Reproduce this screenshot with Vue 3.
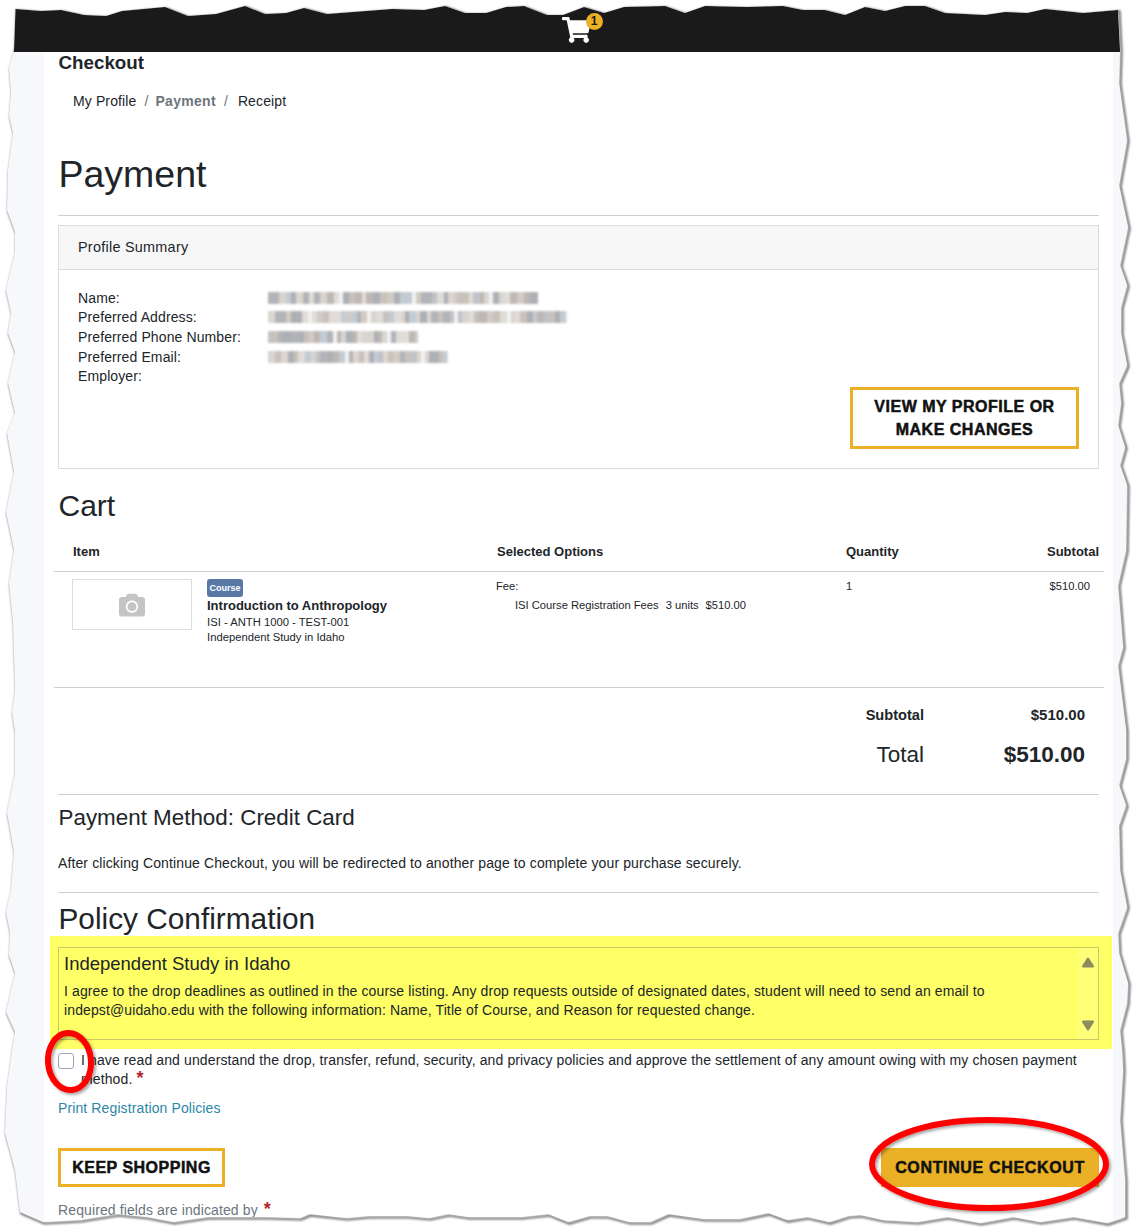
<script setup>
const edge = [
  [15.5,9],[41,11],[61,10],[84,15],[106,16],[122,11],[165,7],[188,16],[216,14],[245,6],[265,14],[286,13],[304,8],[327,14],[392,9],[424,10],[445,6],[465,13],[486,13],[506,7],[524,6],[547,15],[563,15],[584,7],[604,13],[624,7],[665,6],[685,13],[705,6],[747,7],[783,6],[803,10],[825,10],[845,15],[865,7],[885,11],[905,6],[925,6],[945,13],[985,15],[1005,12],[1027,13],[1045,9],[1083,13],[1118,10],
  [1120,50],[1119,83],[1127,140],[1119,185],[1128,227],[1120,265],[1127,285],[1121,307],[1121,333],[1127,365],[1119,383],[1121,403],[1118,425],[1125,447],[1120,465],[1127,485],[1126,550],[1118,585],[1123,647],[1118,665],[1126,730],[1126,758],[1119,785],[1126,805],[1119,825],[1120,870],[1127,907],[1118,933],[1119,953],[1128,983],[1127,1003],[1120,1030],[1122,1050],[1123,1070],[1120,1120],[1125,1180],[1125,1217],
  [1107,1223],[1073,1217],[1040,1222],[1013,1217],[980,1223],[947,1217],[917,1222],[883,1220],[860,1215],[848,1216],[829,1222],[807,1217],[787,1220],[768,1213],[739,1219],[704,1219],[668,1214],[650,1222],[629,1222],[607,1216],[589,1216],[568,1222],[548,1214],[521,1217],[468,1217],[448,1214],[429,1218],[407,1216],[368,1216],[346,1218],[309,1214],[300,1218],[267,1217],[233,1217],[207,1217],[173,1222],[147,1217],[117,1214],[80,1220],[43,1222],[20,1212],
  [15,1170],[5,1133],[7,1087],[12,1050],[15,1032],[6,1012],[15,973],[9,955],[10,933],[6,912],[11,890],[14,852],[7,813],[15,772],[15,732],[12,712],[15,690],[13,623],[9,583],[14,550],[6,512],[14,472],[7,433],[15,413],[8,383],[15,352],[8,333],[11,313],[6,290],[15,252],[15,232],[7,210],[8,170],[13,133],[9,115],[11,93],[9,68],[14,50]
]
const tornPath = 'M' + edge.map(p => p.join(' ')).join('L') + 'Z'
const outerPath = 'M0 0H1137V1232H0Z' + tornPath

const palette = ['#bdb8b4', '#d8d4d0', '#b2b4b9', '#c9c2bb', '#e0dcd8', '#c2c2c8', '#adb0b5', '#d2cbc4', '#c3ccd4', '#dcd6d0']

function blurBackground(width, seed) {
  let s = seed
  const next = () => {
    s = (s * 9301 + 49297) % 233280
    return s / 233280
  }
  const stops = []
  let x = 0
  let untilGap = 30 + next() * 60
  while (x < width) {
    const gap = x > untilGap
    const w = gap ? 4 : 4 + Math.floor(next() * 4)
    const colour = gap ? '#f2f2f2' : palette[Math.floor(next() * palette.length)]
    stops.push(`${colour} ${x}px ${x + w}px`)
    x += w
    if (gap) untilGap = x + 30 + next() * 60
  }
  return `linear-gradient(90deg, ${stops.join(', ')})`
}

const profile = [
  { label: 'Name:', width: 270, seed: 11 },
  { label: 'Preferred Address:', width: 300, seed: 47 },
  { label: 'Preferred Phone Number:', width: 150, seed: 83 },
  { label: 'Preferred Email:', width: 180, seed: 139 },
  { label: 'Employer:', width: 0, seed: 0 }
].map(row => ({
  ...row,
  blur: row.width ? { width: row.width + 'px', backgroundImage: blurBackground(row.width, row.seed) } : null
}))
</script>

<template>
  <div class="root">
    <header class="bar">
      <div class="cart">
        <svg class="cart-icon" viewBox="0 0 576 512" aria-hidden="true"><path fill="#fff" d="M528.12 301.319l47.273-208C578.806 78.301 567.391 64 551.99 64H159.208l-9.166-44.81C147.758 8.021 137.93 0 126.529 0H24C10.745 0 0 10.745 0 24v16c0 13.255 10.745 24 24 24h69.883l70.248 343.435C147.325 417.1 136 435.222 136 456c0 30.928 25.072 56 56 56s56-25.072 56-56c0-15.674-6.447-29.835-16.824-40h209.647C430.447 426.165 424 440.326 424 456c0 30.928 25.072 56 56 56s56-25.072 56-56c0-22.172-12.888-41.332-31.579-50.405l5.517-24.276c3.413-15.018-8.002-29.319-23.403-29.319H218.117l-6.545-32h293.145c11.206 0 20.92-7.754 23.403-18.681z"/></svg>
        <span class="cart-badge">1</span>
      </div>
    </header>

    <main class="main">
      <div class="checkout">Checkout</div>
      <nav class="crumbs">
        <span>My Profile</span><span class="sep">/</span><strong>Payment</strong><span class="sep sep-last">/</span><span>Receipt</span>
      </nav>
      <h1 class="title">Payment</h1>
      <hr class="rule rule-a">

      <section class="card">
        <div class="card-head">Profile Summary</div>
        <div class="card-body">
          <div v-for="row in profile" :key="row.label" class="pf-row">
            <span class="pf-label">{{ row.label }}</span>
            <span v-if="row.blur" class="pf-blur" :style="row.blur"></span>
          </div>
          <div class="pf-actions">
            <a class="btn-outline btn-profile">VIEW MY PROFILE OR<br>MAKE CHANGES</a>
          </div>
        </div>
      </section>

      <h2 class="cart-title">Cart</h2>
      <div class="table">
        <div class="t-head">
          <div class="th-item">Item</div>
          <div>Selected Options</div>
          <div>Quantity</div>
          <div class="th-sub">Subtotal</div>
        </div>
        <div class="t-row">
          <div class="item">
            <div class="thumb">
              <svg class="cam" viewBox="0 0 512 512" aria-hidden="true"><path fill="#c4c4c4" d="M512 144v288c0 26.5-21.5 48-48 48H48c-26.5 0-48-21.5-48-48V144c0-26.5 21.5-48 48-48h88l12.3-32.9c7-18.7 24.9-31.1 44.9-31.1h125.5c20 0 37.9 12.4 44.9 31.1L376 96h88c26.5 0 48 21.5 48 48zM376 288c0-66.2-53.8-120-120-120s-120 53.8-120 120 53.8 120 120 120 120-53.8 120-120zm-32 0c0 48.5-39.5 88-88 88s-88-39.5-88-88 39.5-88 88-88 88 39.5 88 88z"/></svg>
            </div>
            <div class="item-text">
              <span class="badge">Course</span>
              <div class="item-name">Introduction to Anthropology</div>
              <div class="item-meta">ISI - ANTH 1000 - TEST-001</div>
              <div class="item-meta">Independent Study in Idaho</div>
            </div>
          </div>
          <div class="options">
            <div class="opt-label">Fee:</div>
            <div class="opt-line"><span>ISI Course Registration Fees</span><span>3 units</span><span>$510.00</span></div>
          </div>
          <div class="qty">1</div>
          <div class="row-sub">$510.00</div>
        </div>
      </div>

      <div class="totals">
        <div class="tot-label">Subtotal</div>
        <div class="tot-val">$510.00</div>
        <div class="grand-label">Total</div>
        <div class="grand-val">$510.00</div>
      </div>

      <hr class="rule rule-b">
      <h3 class="method">Payment Method: Credit Card</h3>
      <p class="note">After clicking Continue Checkout, you will be redirected to another page to complete your purchase securely.</p>
      <hr class="rule rule-c">
      <h2 class="policy-title">Policy Confirmation</h2>

      <div class="highlight">
        <div class="policy-box">
          <div class="policy-text">
            <div class="policy-name">Independent Study in Idaho</div>
            <p class="policy-copy">I agree to the drop deadlines as outlined in the course listing. Any drop requests outside of designated dates, student will need to send an email to indepst@uidaho.edu with the following information: Name, Title of Course, and Reason for requested change.</p>
          </div>
          <div class="scroll">
            <svg class="arrow" viewBox="0 0 12 10" aria-hidden="true"><path d="M6 1.5L10.5 8.5H1.5Z" fill="#8c8c5e" stroke="#8c8c5e" stroke-width="2" stroke-linejoin="round"/></svg>
            <svg class="arrow" viewBox="0 0 12 10" aria-hidden="true"><path d="M1.5 1.5H10.5L6 8.5Z" fill="#8c8c5e" stroke="#8c8c5e" stroke-width="2" stroke-linejoin="round"/></svg>
          </div>
        </div>
      </div>

      <label class="agree">
        <input type="checkbox" class="check">
        <span class="agree-text">I have read and understand the drop, transfer, refund, security, and privacy policies and approve the settlement of any amount owing with my chosen payment method. <span class="star">*</span></span>
      </label>
      <a class="print">Print Registration Policies</a>

      <div class="actions">
        <a class="btn-outline btn-keep">KEEP SHOPPING</a>
        <a class="btn-solid">CONTINUE CHECKOUT</a>
      </div>
      <p class="required">Required fields are indicated by <span class="star">*</span></p>
    </main>

    <svg class="overlay" width="1137" height="1232" viewBox="0 0 1137 1232" aria-hidden="true">
      <defs>
        <clipPath id="outside"><path clip-rule="evenodd" :d="outerPath"/></clipPath>
        <filter id="soft" x="-5%" y="-5%" width="110%" height="110%"><feGaussianBlur stdDeviation="1.3"/></filter>
        <filter id="rsh" x="-20%" y="-20%" width="140%" height="140%"><feDropShadow dx="2" dy="2" stdDeviation="1.5" flood-color="#000" flood-opacity=".35"/></filter>
      </defs>
      <path fill="#fff" fill-rule="evenodd" :d="outerPath"/>
      <g clip-path="url(#outside)">
        <path :d="tornPath" transform="translate(1.5 1.5)" fill="none" stroke="#666" stroke-width="2.2" filter="url(#soft)"/>
      </g>
      <g filter="url(#rsh)" fill="none" stroke="#f00" stroke-width="6">
        <ellipse cx="69.5" cy="1061.5" rx="21.5" ry="28.5" transform="rotate(-5 69.5 1061.5)"/>
        <ellipse cx="989" cy="1164" rx="117" ry="44"/>
      </g>
    </svg>
  </div>
</template>

<style scoped>
.root {
  position: relative;
  width: 1137px;
  height: 1232px;
  overflow: hidden;
  background: #f7f8fb;
  font-family: "Liberation Sans", Arial, sans-serif;
  font-size: 14px;
  color: #212529;
}
.overlay { position: absolute; left: 0; top: 0; pointer-events: none; }
.bar {
  height: 52px;
  box-sizing: border-box;
  background: #1a1a1a;
  display: flex;
  justify-content: center;
  padding: 13px 0 0 27px;
}
.cart { position: relative; width: 41px; height: 30px; }
.cart-icon { position: absolute; left: 0; top: 4px; width: 29px; height: 26px; }
.cart-badge {
  position: absolute;
  right: 0;
  top: 0;
  width: 17px;
  height: 17px;
  border-radius: 50%;
  background: #eab126;
  color: #1a1a1a;
  font-size: 12px;
  font-weight: 700;
  line-height: 17px;
  text-align: center;
}
.main {
  margin-left: 44px;
  width: 1069px;
  height: 1180px;
  box-sizing: border-box;
  padding: 0 14px;
  background: #fff;
}
.checkout { font-size: 18.8px; font-weight: 700; line-height: 22px; padding-left: .5px; }
.crumbs { margin-top: 17px; padding-left: 15px; line-height: 20px; display: flex; letter-spacing: .115px; }
.crumbs strong { color: #6c757d; font-weight: 700; letter-spacing: .3px; }
.sep { margin: 0 7px 0 8px; color: #6c757d; }
.sep-last { margin-right: 10px; }
.title { margin: 41px 0 0; font-size: 37.5px; font-weight: 400; line-height: 44px; padding-left: .5px; }
.rule { border: 0; height: 1px; background: #cfcfcf; margin: 0; }
.rule-a { margin-top: 19px; }
.card { margin-top: 9px; border: 1px solid #dcdcdc; height: 244px; box-sizing: border-box; }
.card-head {
  height: 44px;
  box-sizing: border-box;
  background: #f7f7f7;
  border-bottom: 1px solid #dcdcdc;
  padding-left: 19px;
  line-height: 43px;
  font-size: 14.4px;
  letter-spacing: .27px;
}
.card-body { padding: 18px 19px 0; }
.pf-row { display: flex; align-items: center; height: 19.6px; }
.pf-label { width: 190px; flex: none; letter-spacing: .115px; }
.pf-blur { height: 12px; filter: blur(1.2px); }
.pf-actions { display: flex; justify-content: flex-end; margin-top: 1px; }
.btn-outline {
  display: block;
  box-sizing: border-box;
  border: 3px solid #eab126;
  color: #111;
  font-weight: 700;
  font-size: 16px;
  letter-spacing: .5px;
  -webkit-text-stroke: .5px #111;
  text-align: center;
}
.btn-profile { width: 229px; height: 62px; line-height: 23px; padding-top: 5px; }
.cart-title { margin: 19px 0 0; font-size: 30px; font-weight: 400; line-height: 36px; padding-left: .5px; }
.table { margin: 17px -5px 0 -4px; }
.t-head, .t-row { display: grid; grid-template-columns: 443px 349px 1fr 1fr; }
.t-head {
  height: 31px;
  box-sizing: border-box;
  border-bottom: 1px solid #cfcfcf;
  font-weight: 700;
  font-size: 13px;
  line-height: 22px;
}
.th-item { padding-left: 19px; }
.th-sub { text-align: right; padding-right: 5px; }
.t-row {
  height: 116px;
  box-sizing: border-box;
  border-bottom: 1px solid #cfcfcf;
  padding-top: 7px;
  font-size: 11.2px;
}
.item { display: flex; padding-left: 18px; gap: 15px; }
.thumb {
  width: 120px;
  height: 51px;
  box-sizing: border-box;
  border: 1px solid #ddd;
  display: flex;
  align-items: center;
  justify-content: center;
}
.cam { width: 26px; height: 26px; }
.item-text { display: flex; flex-direction: column; align-items: flex-start; }
.badge {
  display: block;
  height: 18px;
  width: 36px;
  box-sizing: border-box;
  border-radius: 3px;
  background: #5878a8;
  color: #fff;
  font-size: 9px;
  font-weight: 700;
  line-height: 18px;
  text-align: center;
}
.item-name { font-size: 13px; font-weight: 700; line-height: 18px; }
.item-meta { font-size: 11.25px; line-height: 15px; }
.options { margin-left: -1px; }
.opt-label { line-height: 14px; }
.opt-line { display: flex; gap: 7px; margin: 5px 0 0 19px; line-height: 14px; }
.qty { line-height: 14px; }
.row-sub { text-align: right; padding-right: 14px; line-height: 14px; }
.totals {
  margin-top: 17px;
  padding-right: 14px;
  display: grid;
  grid-template-columns: 1fr 161px;
  row-gap: 15px;
  text-align: right;
}
.tot-label { font-weight: 700; font-size: 14.6px; line-height: 20px; }
.tot-val { font-weight: 700; font-size: 15px; line-height: 20px; }
.grand-label, .grand-val { font-size: 22.5px; line-height: 30px; }
.grand-val { font-weight: 700; }
.rule-b { margin-top: 24px; }
.method { margin: 9px 0 0; font-size: 22.4px; font-weight: 400; line-height: 28px; padding-left: .5px; }
.note { margin: 21px 0 0; line-height: 20px; letter-spacing: .115px; }
.rule-c { margin-top: 19px; }
.policy-title { margin: 8px 0 -1px; font-size: 29.8px; font-weight: 400; line-height: 36px; padding-left: .5px; }
.highlight {
  margin: 0 -13px 0 -8px;
  height: 113px;
  box-sizing: border-box;
  padding: 11px 13px 9px 8px;
  background: #ffff66;
}
.policy-box { display: flex; height: 93px; box-sizing: border-box; border: 1px solid #c8c864; }
.policy-text { flex: 1; padding: 4px 0 0 5px; }
.policy-name { font-size: 18.5px; line-height: 24px; }
.policy-copy { margin: 6px 0 0; line-height: 19px; letter-spacing: .115px; }
.scroll {
  width: 20px;
  flex: none;
  background: #ffff78;
  display: flex;
  flex-direction: column;
  align-items: center;
  justify-content: space-between;
  padding: 9px 0 8px;
  box-sizing: border-box;
}
.arrow { width: 14px; height: 11px; }
.agree { display: flex; gap: 7px; margin-top: 2px; line-height: 19px; }
.agree-text { letter-spacing: .115px; }
.check {
  appearance: none;
  flex: none;
  width: 16px;
  height: 16px;
  margin: 2px 0 0;
  box-sizing: border-box;
  background: #fff;
  border: 1px solid #9aa5b5;
  border-radius: 3px;
}
.star { color: #b5272d; font-size: 18px; font-weight: 700; line-height: 14px; }
.print { display: block; margin-top: 9px; line-height: 20px; color: #2e86a8; letter-spacing: .115px; }
.actions { display: flex; justify-content: space-between; margin-top: 30px; }
.btn-keep { width: 167px; height: 39px; line-height: 33px; }
.btn-solid {
  display: block;
  width: 218px;
  height: 39px;
  background: #eab126;
  color: #111;
  font-weight: 700;
  font-size: 16px;
  letter-spacing: .65px;
  -webkit-text-stroke: .5px #111;
  line-height: 39px;
  text-align: center;
}
.required { margin: 13px 0 0; line-height: 20px; color: #6c757d; letter-spacing: .115px; }
.required .star { margin-left: 2px; }
</style>

<style>
html, body { margin: 0; background: #fff; }
</style>
